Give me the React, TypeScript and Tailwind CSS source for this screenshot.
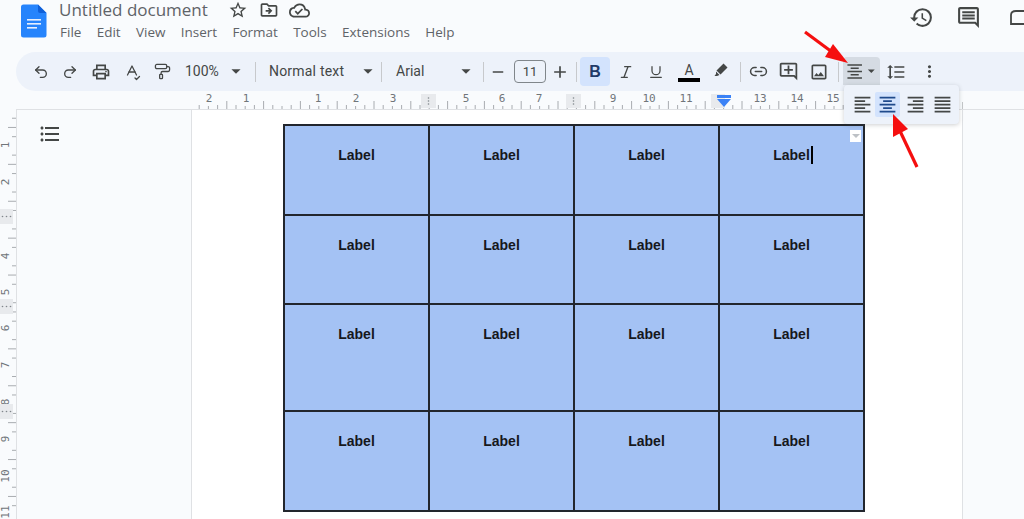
import React from "react";
import {
  MdOutlinePrint, MdOutlineAddComment, MdOutlineImage, MdFormatAlignCenter, MdFormatAlignLeft, MdFormatAlignRight,
  MdFormatAlignJustify, MdFormatLineSpacing, MdMoreVert, MdHistory, MdOutlineComment, MdStarBorder,
  MdOutlineDriveFileMove, MdOutlineCloudDone, MdFormatListBulleted, MdAdd, MdRemove, MdArrowDropDown,
} from "react-icons/md";
import { Undo2, Redo2, SpellCheck, PaintRoller, Italic, Underline, Link2 } from "lucide-react";

const font = { fontFamily: "Roboto, sans-serif" };

function Btn({ children, className = "" }: { children: React.ReactNode; className?: string }) {
  return <div className={`w-[30px] h-[30px] flex items-center justify-center shrink-0 text-[#444746] ${className}`}>{children}</div>;
}

function Sep({ className = "" }: { className?: string }) {
  return <div className={`w-px h-[20px] bg-[#c7c9cc] shrink-0 ${className}`} />;
}

function Caret({ className = "" }: { className?: string }) {
  return <MdArrowDropDown size={22} className={`text-[#444746] shrink-0 ${className}`} />;
}

function DocLogo() {
  return (
    <svg width="26" height="34" viewBox="0 0 26 34" className="shrink-0">
      <path d="M2.5 0.5H17L25.5 9V31a2.5 2.5 0 0 1-2.5 2.5H2.5A2.5 2.5 0 0 1 0 31V3A2.5 2.5 0 0 1 2.5 0.5Z" fill="#2684fc" />
      <path d="M17 0.5L25.5 9H19a2 2 0 0 1-2-2Z" fill="#0f5fd8" />
      <rect x="6" y="15" width="14" height="1.6" fill="#e8f0fe" />
      <rect x="6" y="19" width="14" height="1.6" fill="#e8f0fe" />
      <rect x="6" y="23" width="10" height="1.6" fill="#e8f0fe" />
    </svg>
  );
}

function TopRuler() {
  const ticks: React.ReactNode[] = [];
  const inch = 36.8;
  const zero = 282;
  for (let i = -12; i <= 68; i++) {
    const x = zero + (i * inch) / 4;
    if (x < 191 || x > 963) continue;
    const mod = ((i % 4) + 4) % 4;
    const h = mod === 2 ? 8 : mod === 0 ? 3 : 4;
    ticks.push(<line key={i} x1={x} x2={x} y1={18 - h} y2={18} stroke="#a8acb0" strokeWidth="1" />);
  }
  const nums: [string, number][] = [["2", 209], ["1", 246], ["1", 318], ["2", 356], ["3", 393], ["5", 466], ["6", 502], ["7", 539], ["9", 613], ["10", 649], ["11", 686], ["13", 760], ["14", 797], ["15", 833]];
  return (
    <svg width="1024" height="19" className="block shrink-0">
      {ticks}
      <line x1="962.5" x2="962.5" y1="11" y2="18" stroke="#c4c7c9" />
      <line x1="16" x2="1024" y1="18.5" y2="18.5" stroke="#dfe1e4" />
      {nums.map(([t, x], i) => (
        <text key={i} x={x} y="11" textAnchor="middle" fontSize="11" fill="#70757a" fontFamily="DejaVu Sans Mono, monospace">{t}</text>
      ))}
      {[421, 566].map((x) => (
        <g key={x}>
          <rect x={x} y="3" width="15" height="14" fill="#e8eaed" />
          <circle cx={x + 7.5} cy="7" r="0.8" fill="#80868b" />
          <circle cx={x + 7.5} cy="10" r="0.8" fill="#80868b" />
          <circle cx={x + 7.5} cy="13" r="0.8" fill="#80868b" />
        </g>
      ))}
      <rect x="711" y="3" width="14" height="14" fill="#e8eaed" />
      <rect x="717" y="4" width="14" height="3" fill="#3b82f6" />
      <polygon points="717,8 731,8 724,16" fill="#3b82f6" />
    </svg>
  );
}

function LeftRuler() {
  const ticks: React.ReactNode[] = [];
  const inch = 36.9;
  const zero = -1;
  for (let i = 0; i <= 45; i++) {
    const y = zero + (i * inch) / 4;
    const mod = i % 4;
    if (mod === 0) continue;
    const w = mod === 2 ? 8 : 4;
    ticks.push(<line key={i} x1={16 - w} x2={16} y1={y} y2={y} stroke="#a8acb0" strokeWidth="1" />);
  }
  const nums: [string, number][] = [["1", 35], ["2", 72], ["4", 146], ["5", 182], ["6", 218], ["7", 255], ["8", 292], ["9", 329], ["10", 366], ["11", 402]];
  return (
    <svg width="16" height="410" className="block shrink-0">
      {ticks}
      {nums.map(([t, y], i) => (
        <text key={i} transform={`translate(9 ${y}) rotate(-90)`} textAnchor="middle" fontSize="11" fill="#70757a" fontFamily="DejaVu Sans Mono, monospace">{t}</text>
      ))}
      {[99, 189, 294].map((y) => (
        <g key={y}>
          <rect x="0" y={y} width="13" height="15" fill="#e8eaed" />
          <circle cx="2.5" cy={y + 7.5} r="0.8" fill="#80868b" />
          <circle cx="6.5" cy={y + 7.5} r="0.8" fill="#80868b" />
          <circle cx="10.5" cy={y + 7.5} r="0.8" fill="#80868b" />
        </g>
      ))}
    </svg>
  );
}

const rows = ["h-[90px]", "h-[89px]", "h-[107px]", "h-[100px]"];

function LabelTable() {
  return (
    <table className="w-[582px] table-fixed border-collapse bg-[#a4c2f4]">
      <tbody>
        {rows.map((h, r) => (
          <tr key={r} className={h}>
            {[0, 1, 2, 3].map((c) => (
              <td key={c} className="relative border-2 border-[#22262d] align-top pt-[20px] text-center text-[14px] leading-[18px] font-bold text-[#16181c]" style={{ fontFamily: "'Liberation Sans', sans-serif" }}>
                {r === 0 && c === 3 ? (
                  <>
                    <span className="relative">
                      Label
                      <span className="absolute right-[-3px] top-[-1px] w-[2px] h-[18px] bg-black" />
                    </span>
                    <span className="absolute right-[2px] top-[4px] w-[11px] h-[12px] bg-white flex justify-center pt-[4px]">
                      <span className="w-0 h-0 border-x-[4px] border-x-transparent border-t-[4px] border-t-[#bdc1c6]" />
                    </span>
                  </>
                ) : "Label"}
              </td>
            ))}
          </tr>
        ))}
      </tbody>
    </table>
  );
}

export default function App() {
  return (
    <div className="relative w-[1024px] h-[519px] overflow-hidden bg-[#f9fbfd] flex flex-col" style={font}>
      {/* header */}
      <header className="h-[52px] shrink-0 flex pl-[21px] pr-0">
        <div className="pt-[4px]"><DocLogo /></div>
        <div className="ml-[12px] flex flex-col">
          <div className="flex items-center h-[20px] mb-[2px]">
            <span className="text-[17px] leading-[20px] text-[#5f6368] -mt-[1px]" style={{ fontFamily: "'Open Sans', sans-serif" }}>Untitled document</span>
            <MdStarBorder size={20} className="ml-[20px] text-[#444746]" />
            <MdOutlineDriveFileMove size={20} className="ml-[11px] text-[#444746]" />
            <MdOutlineCloudDone size={21} className="ml-[10px] text-[#444746]" />
          </div>
          <nav className="flex gap-[15.3px] ml-[1px] text-[13.5px] leading-[20px] text-[#5f6368]" style={{ fontFamily: "'Open Sans', sans-serif" }}>
            {["File", "Edit", "View", "Insert", "Format", "Tools", "Extensions", "Help"].map((m) => <span key={m}>{m}</span>)}
          </nav>
        </div>
        <div className="ml-auto flex items-start pt-[5px]">
          <MdHistory size={25} className="text-[#444746]" />
          <MdOutlineComment size={25} className="ml-[22px] text-[#444746]" />
          <svg width="14" height="16" viewBox="0 0 14 16" className="ml-[29px] mt-[5px]">
            <path d="M14 1H6Q1 1 1 5V14H14" fill="none" stroke="#444746" strokeWidth="1.8" />
          </svg>
        </div>
      </header>

      {/* toolbar */}
      <div className="h-[39px] shrink-0 ml-[16px] rounded-l-[20px] bg-[#edf2fa] flex items-center pl-[10px] text-[14px] text-[#444746]">
        <Btn><Undo2 size={16} strokeWidth={2} /></Btn>
        <Btn className="-ml-px"><Redo2 size={16} strokeWidth={2} /></Btn>
        <Btn className="ml-px"><MdOutlinePrint size={20} /></Btn>
        <Btn className="ml-px"><SpellCheck size={18} strokeWidth={1.7} /></Btn>
        <Btn><PaintRoller size={17} strokeWidth={1.8} /></Btn>
        <div className="w-[71px] flex items-center pl-[8px] shrink-0 -mt-[1px]">
          <span>100%</span>
          <Caret className="ml-[6px]" />
        </div>
        <Sep className="ml-[7px]" />
        <div className="w-[125px] pl-[13px] flex items-center shrink-0 -mt-[1px]">
          <span className="w-[86px] tracking-[0.2px]">Normal text</span>
          <Caret className="ml-[2px]" />
        </div>
        <Sep />
        <div className="w-[101px] pl-[14px] flex items-center shrink-0 -mt-[1px]">
          <span className="w-[56px]">Arial</span>
          <Caret className="ml-[3px]" />
        </div>
        <Sep />
        <MdRemove size={18} className="ml-[5px] shrink-0" />
        <div className="ml-[7px] w-[32px] h-[23px] border border-[#80868b] rounded-[4px] flex items-center justify-center text-[13px] shrink-0">11</div>
        <MdAdd size={20} className="ml-[4px] shrink-0" />
        <Sep className="ml-[6px]" />
        <div className="ml-[3px] w-[30px] h-[29px] rounded-[4px] bg-[#d3e3fd] flex items-center justify-center text-[16px] font-bold text-[#1f3a68] shrink-0" style={{ fontFamily: "'Liberation Sans', sans-serif" }}>B</div>
        <Btn className="ml-px"><Italic size={16} strokeWidth={2} /></Btn>
        <Btn><Underline size={16} strokeWidth={1.9} /></Btn>
        <Btn className="ml-[3px] flex-col">
          <span className="text-[14px] leading-[14px] mt-[1px]">A</span>
          <span className="w-[22px] h-[4px] bg-black mt-[1px]" />
        </Btn>
        <Btn className="ml-[2px] -mt-[3px]">
          <svg width="16" height="16" viewBox="0 0 16 16">
            <path d="M10.5 1.5L14.5 5.5L7.5 12.5L3.5 8.5Z M3 9.5L6.5 13L4 14H1.5L3 12Z" fill="#444746" />
          </svg>
        </Btn>
        <Sep className="ml-[4px]" />
        <Btn className="ml-[2px]"><Link2 size={19} strokeWidth={1.9} /></Btn>
        <Btn><MdOutlineAddComment size={21} /></Btn>
        <Btn className="ml-px"><MdOutlineImage size={20} /></Btn>
        <Sep className="ml-[4px]" />
        <div className="ml-[4px] w-[37px] h-[28px] self-start mt-[5px] rounded-t-[4px] bg-[#d5dbe3] flex items-center pl-[2px] shrink-0">
          <MdFormatAlignCenter size={21} />
          <MdArrowDropDown size={18} className="-ml-[1px]" />
        </div>
        <Btn className="ml-px"><MdFormatLineSpacing size={20} /></Btn>
        <Btn className="ml-[3px]"><MdMoreVert size={19} /></Btn>
      </div>

      <TopRuler />

      {/* body */}
      <main className="flex flex-1 min-h-0">
        <LeftRuler />
        <aside className="w-[175px] border-l border-[#dfe1e4] pl-[21px] pt-[12px] shrink-0">
          <MdFormatListBulleted size={24} className="text-[#444746]" />
        </aside>
        <section className="w-[772px] bg-white border-x border-[#dfe1e4] pl-[91px] pt-[14px] shrink-0">
          <LabelTable />
        </section>
      </main>

      {/* alignment popup */}
      <div className="absolute left-[844px] top-[85px] w-[115px] h-[39px] rounded-[4px] bg-[#edf2fa] shadow-[0_1px_4px_rgba(60,64,67,0.25)] flex items-center pl-[6px] text-[#444746]">
        <div className="w-[25px] h-[25px] flex items-center justify-center"><MdFormatAlignLeft size={21} /></div>
        <div className="w-[25px] h-[25px] flex items-center justify-center bg-[#d3e3fd] rounded-[2px] text-[#1f4a8c]"><MdFormatAlignCenter size={21} /></div>
        <div className="w-[30px] h-[25px] flex items-center justify-center"><MdFormatAlignRight size={21} /></div>
        <div className="w-[24px] h-[25px] flex items-center justify-center"><MdFormatAlignJustify size={21} /></div>
      </div>

      {/* annotation arrows */}
      <svg className="absolute inset-0 pointer-events-none" width="1024" height="519">
        <line x1="805" y1="32" x2="832" y2="52" stroke="#f50f0f" strokeWidth="3.2" />
        <polygon points="848,63 825,57 833,44" fill="#f50f0f" />
        <line x1="917" y1="167" x2="900" y2="131" stroke="#f50f0f" strokeWidth="3.2" />
        <polygon points="893,114 893,137 908,129" fill="#f50f0f" />
      </svg>
    </div>
  );
}
